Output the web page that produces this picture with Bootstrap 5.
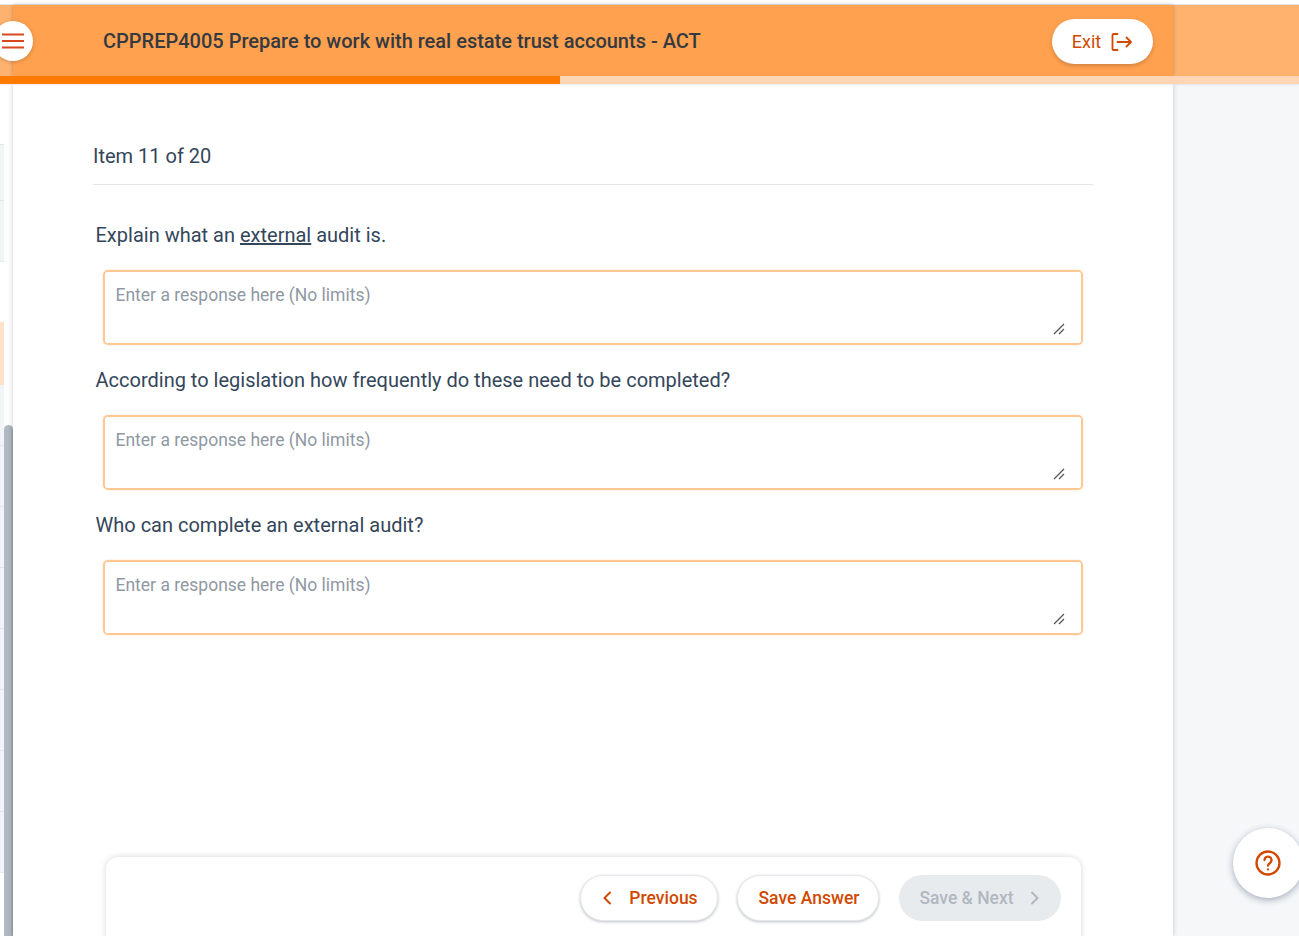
<!DOCTYPE html>
<html lang="en">
<head>
<meta charset="utf-8">
<title>CPPREP4005</title>
<link href="https://cdn.jsdelivr.net/npm/bootstrap@5.3.0/dist/css/bootstrap.min.css" rel="stylesheet">
<style>
html,body{height:936px;overflow:hidden}
body{background:#f5f7f9;font-family:Roboto,"Liberation Sans",sans-serif;color:#34465a;position:relative}
.top-gap{height:5px;background:#fff;border-bottom:1px solid #e6e6e6}
.head-bar{height:71px;background:#ffb26e}
.head-edge{width:13px;flex:none}
.head-main{width:1160px;flex:none;background:#ffa14f;box-shadow:0 0 4px rgba(0,0,0,.25);padding:0 20px 0 90px}
.head-title{font-size:20px;font-weight:500;color:#343a40;margin:0;line-height:1;padding-top:1px}
.burger{position:absolute;left:-7px;top:21px;width:40px;height:40px;border-radius:50%;background:#fff;box-shadow:0 1px 4px rgba(0,0,0,.2)}
.exit-btn{width:101px;height:45px;margin-top:2px;border-radius:23px;background:#fff;color:#d14900;font-size:18px;border:0;box-shadow:0 2px 4px rgba(0,0,0,.18);gap:10px}
.prog-track{height:8px;background:#ffd5b3;position:relative;z-index:2;box-shadow:0 1px 2px rgba(0,0,0,.08)}
.prog-fill{height:8px;background:#ff7a00}
.page-body{height:852px}
.side-strip{width:13px;flex:none;position:relative;background:#fff}
.side-row{height:61px;background:#f2f5f8;border-bottom:1px solid #e4e7eb;width:13px}
.side-row.r0{background:#fff;border-bottom-color:#e4e7eb}
.side-row.r1{height:56px}
.side-row.r3{background:#fff;border-bottom:0;height:60px}
.side-row.r4{background:#ffe2c7;border-bottom:0;height:63px}
.side-cover{position:absolute;top:0;bottom:0;right:0;width:9px;background:#fff}
.side-thumb{position:absolute;left:4px;right:0;top:341px;bottom:0;background:linear-gradient(90deg,#b2bbc4,#aeb7c1 70%,#98a2ad);border-radius:5px 5px 0 0}
.main-panel{width:1160px;flex:none;background:#fff;box-shadow:0 0 5px rgba(0,0,0,.2);padding:0 80px;position:relative}
.item-head{height:101px;border-bottom:1px solid #e2e4e7;font-size:20px;padding-bottom:13px}
.q-text{font-size:20px;margin:0 0 0 2.500px;height:29px;line-height:29px}
.q-block{margin-top:36px}
.q-next{margin-top:21px}
.resp-wrap{position:relative;width:980px;height:75px;margin:20px 0 0 10px;border:2px solid #ffc792;border-radius:5px;box-shadow:0 0 2px rgba(255,150,60,.3)}
.resp{display:block;width:100%;height:100%;border:0;border-radius:3px;resize:none;font-size:17.500px;padding:12px 10.500px;line-height:1.35;outline:0;font-family:inherit;color:#34465a}
.resp::placeholder{color:#8f98a3;opacity:1}
.grip-ico{position:absolute;right:16px;bottom:8px;pointer-events:none}
.foot-card{position:absolute;left:93px;width:975px;top:773px;height:120px;border-radius:12px;background:#fff;box-shadow:0 0 6px rgba(0,0,0,.16);padding:18px 20px 0 0;gap:19px}
.act-btn{height:46px;border-radius:23px;background:#fff;border:1px solid #e6e7ea;box-shadow:0 1px 3px rgba(60,70,90,.35);color:#d14900;font-size:17.500px;font-weight:500;gap:0;padding:0}
.act-prev{width:138px;gap:17px;padding-left:2px}
.act-save{width:142px;padding-left:2px}
.act-next{width:162px;background:#e8ebee;color:#b1b8c0;border:0;box-shadow:none;gap:16px;margin-left:1px;padding-right:1px}
.help-btn{position:absolute;left:1233px;top:828px;width:70px;height:70px;border-radius:50%;background:#fff;box-shadow:0 2px 7px rgba(40,60,90,.4);border:0}
</style>
</head>
<body>
<div class="top-gap"></div>
<header class="head-bar d-flex">
  <div class="head-edge"></div>
  <div class="head-main d-flex align-items-center justify-content-between">
    <h1 class="head-title">CPPREP4005 Prepare to work with real estate trust accounts - ACT</h1>
    <button class="exit-btn btn d-flex align-items-center justify-content-center p-0" type="button">Exit
      <svg width="22" height="20" viewBox="0 0 22 20" fill="none" stroke="#d14900" stroke-width="1.8" stroke-linecap="round" stroke-linejoin="round"><path d="M6.5 2H2.500a1 1 0 0 0-1 1v14a1 1 0 0 0 1 1h4"/><path d="M6.500 10h13.500M15.500 5.500 20 10l-4.500 4.500"/></svg>
    </button>
  </div>
</header>
<button class="burger btn p-0 d-flex align-items-center justify-content-center" type="button" aria-label="Menu">
  <svg width="24" height="16" viewBox="0 0 24 16" fill="none" stroke="#d9481c" stroke-width="2"><path d="M1 1.500h22M1 8h22M1 14.500h22"/></svg>
</button>
<div class="prog-track"><div class="prog-fill" style="width:560px"></div></div>
<div class="page-body d-flex">
  <div class="side-strip">
    <div class="side-row r0"></div>
    <div class="side-row r1"></div>
    <div class="side-row"></div>
    <div class="side-row r3"></div>
    <div class="side-row r4"></div>
    <div class="side-row"></div>
    <div class="side-row"></div>
    <div class="side-row"></div>
    <div class="side-row"></div>
    <div class="side-row"></div>
    <div class="side-row"></div>
    <div class="side-row"></div>
    <div class="side-row"></div>
    <div class="side-cover"></div>
    <div class="side-thumb"></div>
  </div>
  <main class="main-panel">
    <div class="item-head d-flex align-items-end">Item 11 of 20</div>
    <section class="q-block">
      <p class="q-text">Explain what an <u>external</u> audit is.</p>
      <div class="resp-wrap"><textarea class="resp" placeholder="Enter a response here (No limits)"></textarea><svg class="grip-ico" width="12" height="12" viewBox="0 0 12 12" stroke="#555" stroke-width="1.300" fill="none"><path d="M1 11 11 1M6 11l5-5"/></svg></div>
    </section>
    <section class="q-next">
      <p class="q-text">According to legislation how frequently do these need to be completed?</p>
      <div class="resp-wrap"><textarea class="resp" placeholder="Enter a response here (No limits)"></textarea><svg class="grip-ico" width="12" height="12" viewBox="0 0 12 12" stroke="#555" stroke-width="1.300" fill="none"><path d="M1 11 11 1M6 11l5-5"/></svg></div>
    </section>
    <section class="q-next">
      <p class="q-text">Who can complete an external audit?</p>
      <div class="resp-wrap"><textarea class="resp" placeholder="Enter a response here (No limits)"></textarea><svg class="grip-ico" width="12" height="12" viewBox="0 0 12 12" stroke="#555" stroke-width="1.300" fill="none"><path d="M1 11 11 1M6 11l5-5"/></svg></div>
    </section>
    <div class="foot-card d-flex justify-content-end align-items-start">
      <button class="act-btn act-prev btn d-flex align-items-center justify-content-center" type="button">
        <svg width="10" height="14" viewBox="0 0 10 14" fill="none" stroke="#d14900" stroke-width="2" stroke-linecap="round" stroke-linejoin="round"><path d="M8 1.500 2.500 7 8 12.500"/></svg>Previous</button>
      <button class="act-btn act-save btn d-flex align-items-center justify-content-center" type="button">Save Answer</button>
      <button class="act-btn act-next btn d-flex align-items-center justify-content-center" type="button">Save &amp; Next
        <svg width="10" height="14" viewBox="0 0 10 14" fill="none" stroke="#b1b8c0" stroke-width="2" stroke-linecap="round" stroke-linejoin="round"><path d="M2 1.500 7.500 7 2 12.500"/></svg></button>
    </div>
  </main>
</div>
<button class="help-btn btn p-0" type="button" aria-label="Help">
  <svg width="26" height="26" viewBox="0 0 26 26" fill="none" stroke="#d14900" stroke-width="2.300" stroke-linecap="round"><circle cx="13" cy="13" r="11.500"/><path d="M9.500 10a3.500 3.500 0 1 1 5.500 3c-1.300.8-2 1.500-2 2.800"/><path d="M13 19.300v.1"/></svg>
</button>
</body>
</html>
